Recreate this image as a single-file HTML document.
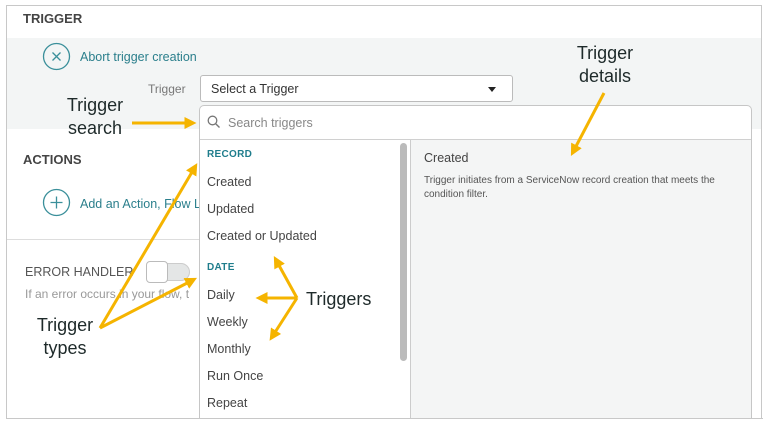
<!DOCTYPE html>
<html><head><style>
*{margin:0;padding:0;box-sizing:border-box}
body{width:768px;height:424px;background:#fff;font-family:"Liberation Sans",sans-serif;position:relative;overflow:hidden}
.a{position:absolute}
.frame{left:6px;top:5px;width:756px;height:414px;border:1px solid #c8c8c8}
.t{color:#333;font-size:12px}
.lbl{font-size:18px;color:#1e2a2a;text-align:center;line-height:23px}
.item{left:207px;font-size:12.5px;color:#444}
.hdr{left:207px;font-size:10px;font-weight:bold;color:#1f7d8c;letter-spacing:.3px}
</style></head><body>
<div class="a frame"></div>
<div class="a" style="left:7px;top:38px;width:754px;height:91px;background:#f3f5f5"></div>
<div class="a t" style="left:23px;top:11px;font-size:13px;font-weight:bold;color:#444">TRIGGER</div>
<svg class="a" style="left:42px;top:42px" width="29" height="29"><circle cx="14.5" cy="14.5" r="13" fill="none" stroke="#3a8f9a" stroke-width="1.3"/><path d="M10.5 10.5L18.5 18.5M18.5 10.5L10.5 18.5" stroke="#3a8f9a" stroke-width="1.3"/></svg>
<div class="a" style="left:80px;top:50px;font-size:12.5px;color:#2b7f8c">Abort trigger creation</div>
<div class="a" style="left:148px;top:82px;font-size:12px;color:#777">Trigger</div>
<div class="a" style="left:200px;top:75px;width:313px;height:27px;border:1px solid #bbb;border-radius:3px;background:#fff;font-size:12.5px;color:#333;padding:6px 10px">Select a Trigger</div>
<div class="a" style="left:488px;top:87px;width:0;height:0;border-left:4px solid transparent;border-right:4px solid transparent;border-top:5px solid #222"></div>
<div class="a t" style="left:23px;top:152px;font-size:13px;font-weight:bold;color:#444">ACTIONS</div>
<svg class="a" style="left:42px;top:188px" width="29" height="29"><circle cx="14.5" cy="14.5" r="13" fill="none" stroke="#3a8f9a" stroke-width="1.3"/><path d="M14.5 8.5V20.5M8.5 14.5H20.5" stroke="#3a8f9a" stroke-width="1.3"/></svg>
<div class="a" style="left:80px;top:197px;font-size:12.5px;color:#2b7f8c">Add an Action, Flow Lo</div>
<div class="a" style="left:7px;top:239px;width:193px;height:1px;background:#ddd"></div>
<div class="a" style="left:25px;top:265px;font-size:12.5px;color:#555">ERROR HANDLER</div>
<div class="a" style="left:147px;top:263px;width:43px;height:18px;background:#e4e6e6;border-radius:9px;border:1px solid #ccc"></div>
<div class="a" style="left:146px;top:261px;width:22px;height:22px;background:#fff;border:1px solid #bbb;border-radius:4px"></div>
<div class="a" style="left:25px;top:287px;font-size:12px;color:#999">If an error occurs in your flow, t</div>
<!-- dropdown -->
<div class="a" style="left:199px;top:105px;width:553px;height:314px;border:1px solid #c6c6c6;border-bottom:none;border-radius:5px 5px 0 0;background:#fff"></div>
<div class="a" style="left:200px;top:139px;width:551px;height:1px;background:#d0d0d0"></div>
<svg class="a" style="left:207px;top:115px" width="14" height="14"><circle cx="5.5" cy="5.5" r="4.3" fill="none" stroke="#777" stroke-width="1.3"/><line x1="8.7" y1="8.7" x2="12.5" y2="12.5" stroke="#777" stroke-width="1.4"/></svg>
<div class="a" style="left:228px;top:116px;font-size:12.5px;color:#888">Search triggers</div>
<div class="a" style="left:410px;top:140px;width:341px;height:279px;background:#f4f5f5;border-left:1px solid #ccc"></div>
<div class="a" style="left:400px;top:143px;width:7px;height:218px;background:#bbb;border-radius:4px"></div>
<div class="a" style="left:424px;top:151px;font-size:12.5px;color:#444">Created</div>
<div class="a" style="left:424px;top:174px;font-size:10px;color:#555;line-height:14px;width:310px">Trigger initiates from a ServiceNow record creation that meets the condition filter.</div>
<div class="a hdr" style="top:149px">RECORD</div>
<div class="a item" style="top:175px">Created</div>
<div class="a item" style="top:202px">Updated</div>
<div class="a item" style="top:229px">Created or Updated</div>
<div class="a hdr" style="top:262px">DATE</div>
<div class="a item" style="top:288px">Daily</div>
<div class="a item" style="top:315px">Weekly</div>
<div class="a item" style="top:342px">Monthly</div>
<div class="a item" style="top:369px">Run Once</div>
<div class="a item" style="top:396px">Repeat</div>
<div class="a" style="left:6px;top:418px;width:757px;height:1px;background:#c8c8c8"></div>
<!-- annotations -->
<div class="a lbl" style="left:50px;top:94px;width:90px">Trigger<br>search</div>
<div class="a lbl" style="left:560px;top:42px;width:90px">Trigger<br>details</div>
<div class="a lbl" style="left:306px;top:288px;width:80px;text-align:left">Triggers</div>
<div class="a lbl" style="left:20px;top:314px;width:90px">Trigger<br>types</div>
<svg class="a" style="left:0;top:0" width="768" height="424">
<defs><marker id="h" markerWidth="4" markerHeight="4" refX="2.5" refY="2" orient="auto"><path d="M0,0 L4,2 L0,4 Z" fill="#f5b400"/></marker></defs>
<g stroke="#f5b400" stroke-width="3" fill="none" marker-end="url(#h)">
<line x1="132" y1="123" x2="192" y2="123"/>
<line x1="604" y1="93" x2="573" y2="152"/>
<line x1="100" y1="328" x2="195" y2="167"/>
<line x1="100" y1="328" x2="193" y2="280"/>
<line x1="297" y1="298" x2="276" y2="260"/>
<line x1="297" y1="298" x2="260" y2="298"/>
<line x1="297" y1="298" x2="272" y2="337"/>
</g></svg>
</body></html>
